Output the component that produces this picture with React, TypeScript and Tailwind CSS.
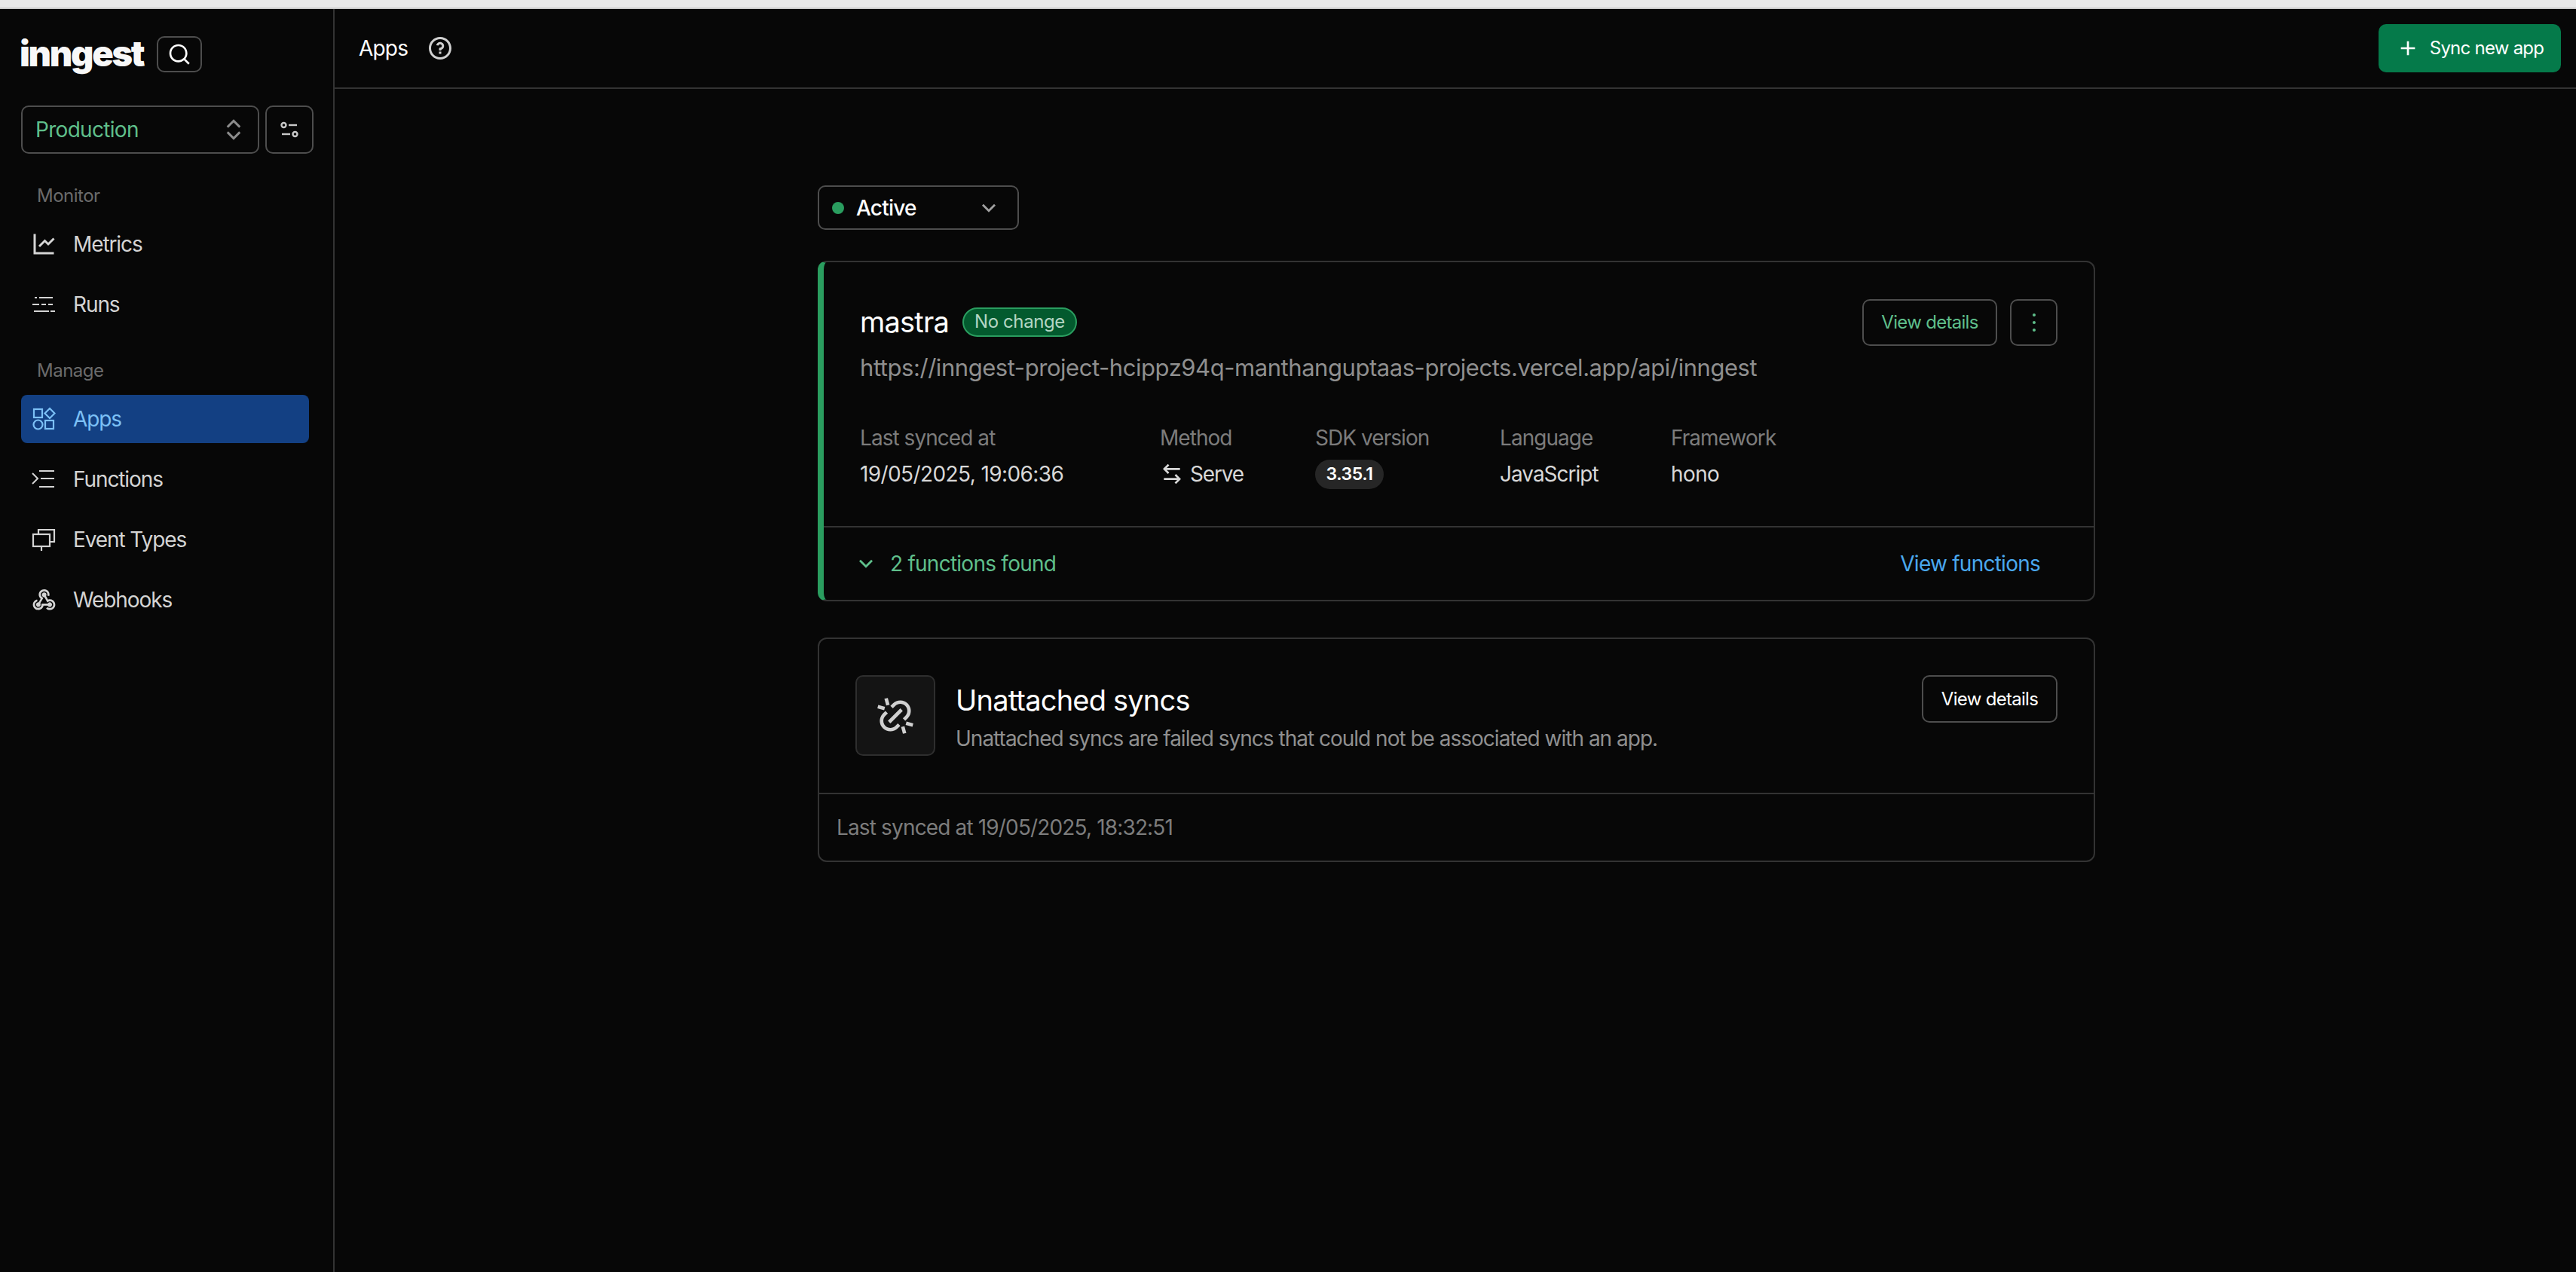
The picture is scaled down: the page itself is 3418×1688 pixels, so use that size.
import {
  RiAddLine,
  RiArrowDownSLine,
  RiArrowLeftRightLine,
  RiExpandUpDownLine,
  RiLineChartLine,
  RiLinkUnlinkM,
  RiMore2Line,
  RiQuestionLine,
  RiSearchLine,
  RiWebhookLine,
} from "react-icons/ri";

function SettingsIcon() {
  return (
    <svg viewBox="0 0 24 24" className="h-[24px] w-[24px]" fill="none" stroke="currentColor" strokeWidth="2.4">
      <circle cx="4.5" cy="6" r="3" />
      <path d="M11 6h11" />
      <circle cx="19.5" cy="18" r="3" />
      <path d="M2 18h11" />
    </svg>
  );
}

function RunsIcon() {
  return (
    <svg viewBox="0 0 32 32" className="h-[32px] w-[32px]" fill="none" stroke="currentColor" strokeWidth="2">
      <path d="M4 7h3M10 7h18M1 16h9M13 16h6M22 16h6M3 25h20M25 25h6" />
    </svg>
  );
}

function AppsIcon() {
  return (
    <svg viewBox="0 0 32 32" className="h-[32px] w-[32px]" fill="none" stroke="currentColor" strokeWidth="2.2">
      <rect x="3" y="3" width="11" height="11" />
      <path d="M24 2l6.5 6.5L24 15l-6.5-6.5z" />
      <circle cx="8.5" cy="23.5" r="6" />
      <rect x="18" y="18" width="11" height="11" />
    </svg>
  );
}

function FunctionsIcon() {
  return (
    <svg viewBox="0 0 32 32" className="h-[32px] w-[32px]" fill="none" stroke="currentColor" strokeWidth="2.2">
      <path d="M1 8l7 7-7 7" strokeWidth="2" />
      <path d="M10 5h20M12 15h18M10 26h20" />
    </svg>
  );
}

function EventTypesIcon() {
  return (
    <svg viewBox="0 0 32 32" className="h-[32px] w-[32px]" fill="none" stroke="currentColor" strokeWidth="2.2">
      <path d="M9 9V3h21v16h-6" />
      <rect x="2" y="9" width="22" height="16" />
      <path d="M13 25v6" />
    </svg>
  );
}

function NavItem({ icon, label, active }: { icon: React.ReactNode; label: string; active?: boolean }) {
  return (
    <a
      className={
        active
          ? "flex h-[64px] items-center gap-[23px] rounded-[8px] bg-[#134083] px-[14px] text-[28px] tracking-[-1.1px] text-[#7cc0f6]"
          : "flex h-[64px] items-center gap-[23px] rounded-[8px] px-[14px] text-[28px] tracking-[-1.1px] text-[#d4d4d4]"
      }
    >
      {icon}
      {label}
    </a>
  );
}

function Meta({ label, width, children }: { label: string; width: string; children: React.ReactNode }) {
  return (
    <div className={width}>
      <div className="flex h-[36px] items-center text-[28px] tracking-[-0.95px] text-[#7c7c7c]">{label}</div>
      <div className="mt-[10px] flex h-[40px] items-center text-[28px] tracking-[-0.6px] text-[#d8d8d8]">{children}</div>
    </div>
  );
}

export default function App() {
  return (
    <div className="flex h-screen flex-col overflow-hidden bg-[#070707] font-['Inter',sans-serif]">
      <div className="h-[12px] shrink-0 border-b-2 border-[#c9c9c9] bg-[#e8e8e8]" />
      <div className="flex min-h-0 flex-1">
        {/* Sidebar */}
        <aside className="w-[444px] shrink-0 border-r-2 border-[#333333] px-[28px] pt-[36px]">
          <div className="flex h-[48px] items-center">
            <span className="-ml-[2px] w-[182px] pb-[4px] text-[47px] leading-none font-black tracking-[-2.3px] text-[#f8f8f8]">inngest</span>
            <button type="button" className="flex h-[48px] w-[60px] items-center justify-center rounded-[10px] border-2 border-[#4d4d4d] text-white">
              <RiSearchLine className="h-[32px] w-[32px]" />
            </button>
          </div>
          <div className="mt-[44px] flex gap-[8px]">
            <button type="button" className="flex h-[64px] w-[316px] shrink-0 items-center justify-between rounded-[10px] border-2 border-[#4d4d4d] pr-[14px] pl-[17px] text-[28px] tracking-[-0.7px] text-[#5fbf8b]">
              Production
              <RiExpandUpDownLine className="h-[36px] w-[36px] text-[#8c8c8c]" />
            </button>
            <button type="button" className="flex h-[64px] w-[64px] shrink-0 items-center justify-center rounded-[10px] border-2 border-[#4d4d4d] text-[#c8c8c8]">
              <SettingsIcon />
            </button>
          </div>
          <nav className="mt-[42px] w-[382px]">
            <div className="flex h-[28px] items-center pl-[21px] text-[24px] tracking-[-0.5px] text-[#6b6b6b]">Monitor</div>
            <div className="mt-[18px] flex flex-col gap-[16px]">
              <NavItem icon={<RiLineChartLine className="-m-[2px] h-[36px] w-[36px]" />} label="Metrics" />
              <NavItem icon={<RunsIcon />} label="Runs" />
            </div>
            <div className="mt-[42px] flex h-[28px] items-center pl-[21px] text-[24px] tracking-[-0.5px] text-[#6b6b6b]">Manage</div>
            <div className="mt-[18px] flex flex-col gap-[16px]">
              <NavItem icon={<AppsIcon />} label="Apps" active />
              <NavItem icon={<FunctionsIcon />} label="Functions" />
              <NavItem icon={<EventTypesIcon />} label="Event Types" />
              <NavItem icon={<RiWebhookLine className="-m-[1.5px] h-[35px] w-[35px]" />} label="Webhooks" />
            </div>
          </nav>
        </aside>

        {/* Main */}
        <main className="min-w-0 flex-1">
          <header className="flex h-[106px] items-center justify-between border-b-2 border-[#333333] pr-[20px] pl-[32px]">
            <div className="flex items-center gap-[25px] text-[28px] tracking-[-0.8px] text-white">
              Apps
              <RiQuestionLine className="h-[36px] w-[36px] text-[#d0d0d0]" />
            </div>
            <button type="button" className="flex h-[64px] w-[242px] items-center justify-center gap-[13px] rounded-[10px] bg-[#057a4a] text-[24px] tracking-[-0.75px] text-white">
              <RiAddLine className="h-[32px] w-[32px]" />
              Sync new app
            </button>
          </header>

          <div className="ml-[641px] w-[1695px] pt-[128px]">
            <button type="button" className="flex h-[59px] w-[267px] items-center rounded-[10px] border-2 border-[#4d4d4d] pl-[17px] text-[28px] font-medium tracking-[-0.8px] text-white">
              <span className="h-[16px] w-[16px] rounded-full bg-[#2a9d5f]" />
              <span className="ml-[16px] flex-1 text-left">Active</span>
              <RiArrowDownSLine className="mr-[21px] h-[34px] w-[34px] text-[#a0a0a0]" />
            </button>

            {/* App card */}
            <section className="mt-[41px] rounded-[12px] border-2 border-l-[8px] border-[#333333] border-l-[#2a9d5f]">
              <div className="h-[352px] border-b-2 border-[#333333] pt-[49px] pr-[48px] pl-[48px]">
                <div className="flex items-start justify-between">
                  <div>
                    <div className="-mt-[1px] flex h-[62px] items-center gap-[18px]">
                      <span className="text-[38px] tracking-[-0.8px] text-white">mastra</span>
                      <span className="flex h-[39px] w-[152px] items-center justify-center rounded-full border-2 border-[#2a9d5f] bg-[#035a2e] text-[24px] tracking-[-0.4px] text-[#b4d6c3]">
                        No change
                      </span>
                    </div>
                    <div className="mt-[10px] h-[40px] text-[31px] leading-[40px] tracking-[-0.45px] text-[#8f8f8f]">
                      https://inngest-project-hcippz94q-manthanguptaas-projects.vercel.app/api/inngest
                    </div>
                  </div>
                  <div className="flex gap-[17px]">
                    <button type="button" className="flex h-[62px] w-[179px] items-center justify-center rounded-[10px] border-2 border-[#4d4d4d] text-[24px] tracking-[-0.7px] text-[#5fbf8b]">
                      View details
                    </button>
                    <button type="button" className="flex h-[62px] w-[63px] items-center justify-center rounded-[10px] border-2 border-[#4d4d4d] text-[#5fbf8b]">
                      <RiMore2Line className="h-[32px] w-[32px]" />
                    </button>
                  </div>
                </div>
                <div className="mt-[55px] flex">
                  <Meta label="Last synced at" width="w-[398px]">19/05/2025, 19:06:36</Meta>
                  <Meta label="Method" width="w-[206px]">
                    <RiArrowLeftRightLine className="mr-[8px] h-[32px] w-[32px]" />
                    <span className="tracking-[-1.2px]">Serve</span>
                  </Meta>
                  <Meta label="SDK version" width="w-[245px]">
                    <span className="flex h-[39px] w-[91px] items-center justify-center rounded-full bg-[#262626] text-[23px] font-semibold tracking-[-0.4px] text-white">
                      3.35.1
                    </span>
                  </Meta>
                  <Meta label="Language" width="w-[227px]">
                    <span className="tracking-[-1px]">JavaScript</span>
                  </Meta>
                  <Meta label="Framework" width="w-[200px]">hono</Meta>
                </div>
              </div>
              <div className="flex h-[96px] items-center justify-between pr-[71px] pl-[39px]">
                <div className="flex items-center gap-[15px] text-[28px] tracking-[-0.75px] text-[#5fbf8b]">
                  <RiArrowDownSLine className="h-[34px] w-[34px]" />
                  2 functions found
                </div>
                <a className="text-[28px] tracking-[-0.75px] text-[#4aa8ee]">View functions</a>
              </div>
            </section>

            {/* Unattached syncs */}
            <section className="mt-[48px] rounded-[12px] border-2 border-[#333333]">
              <div className="flex h-[206px] items-start justify-between border-b-2 border-[#333333] pt-[48px] pr-[48px] pl-[48px]">
                <div className="flex gap-[27px]">
                  <div className="flex h-[107px] w-[106px] items-center justify-center rounded-[10px] border-2 border-[#2e2e2e] bg-[#141414] text-[#d0d0d0]">
                    <RiLinkUnlinkM className="h-[56px] w-[56px]" />
                  </div>
                  <div className="pt-[9px]">
                    <div className="h-[48px] text-[38px] leading-[48px] tracking-[-0.8px] text-white">Unattached syncs</div>
                    <div className="mt-[9px] h-[36px] text-[28px] leading-[36px] tracking-[-1px] text-[#8f8f8f]">
                      Unattached syncs are failed syncs that could not be associated with an app.
                    </div>
                  </div>
                </div>
                <button type="button" className="flex h-[63px] w-[180px] items-center justify-center rounded-[10px] border-2 border-[#4d4d4d] text-[24px] tracking-[-0.7px] text-white">
                  View details
                </button>
              </div>
              <div className="flex h-[88px] items-center pl-[23px] text-[28px] tracking-[-0.85px] text-[#7c7c7c]">
                Last synced at 19/05/2025, 18:32:51
              </div>
            </section>
          </div>
        </main>
      </div>
    </div>
  );
}
